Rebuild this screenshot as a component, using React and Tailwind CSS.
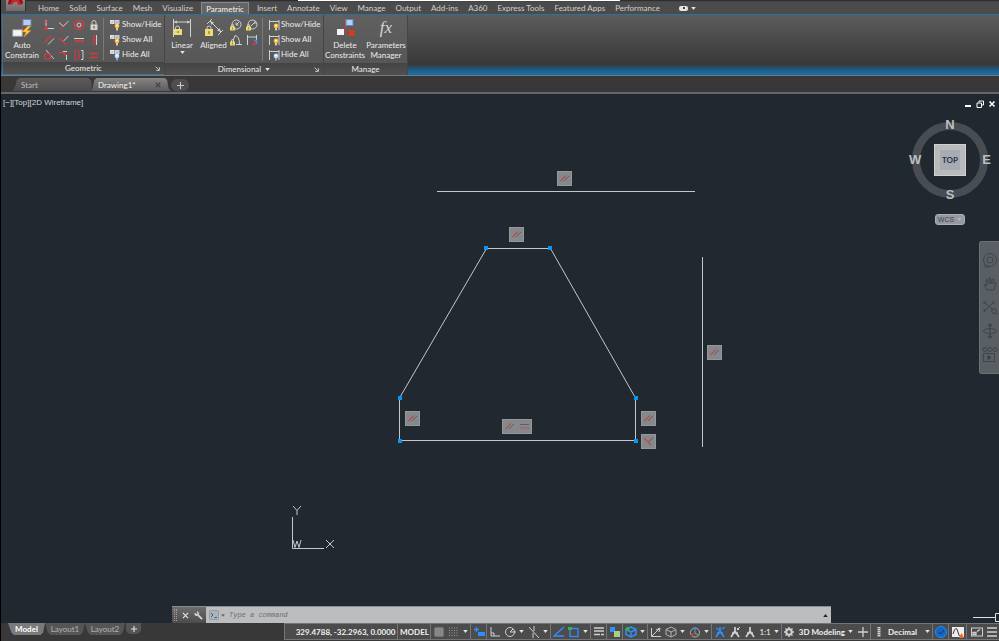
import React, { useState } from "react";

const ribbonTabs = [
  "Home", "Solid", "Surface", "Mesh", "Visualize", "Parametric", "Insert", "Annotate",
  "View", "Manage", "Output", "Add-ins", "A360", "Express Tools", "Featured Apps", "Performance",
];

const RED = "#e0363a";
const BLUE = "#2f8fff";

const Icon = ({ children, box = 12, className = "w-3 h-3" }) => (
  <svg viewBox={`0 0 ${box} ${box}`} className={`shrink-0 ${className}`} fill="none" stroke="#d0d0d0" strokeWidth="1" aria-hidden="true">
    {children}
  </svg>
);

const Caret = ({ className = "" }) => (
  <svg viewBox="0 0 6 4" className={`w-[5px] h-[3px] shrink-0 ${className}`} aria-hidden="true">
    <path d="M0 0H6L3 4Z" fill="#e4e4e4" />
  </svg>
);

const Lock = ({ x = 0, y = 0 }) => (
  <g transform={`translate(${x} ${y})`}>
    <path d="M1.5 4V2.500a1 1 0 0 1 2 0V4" stroke="#d8d8d8" />
    <rect x="0" y="3.5" width="5" height="4" fill="#efd76a" stroke="none" />
    <path d="M2.500 4.500V6.500" stroke="#9a7a20" strokeWidth=".8" />
  </g>
);

// 4 x 3 grid of the geometric constraints
const constraints = [
  { name: "Coincident", art: <><path d="M3 1V7M4.500 9.500H11" /><path d="M1 3H5M3 7V9" stroke={RED} /><rect x="1.500" y="8" width="3" height="3" fill={RED} stroke="none" /></> },
  { name: "Collinear", art: <><path d="M5.500 7L10.500 2M1 3.500L5.500 7.500" /><path d="M2 10.500L5 8" stroke={RED} strokeWidth="1.300" /></> },
  { name: "Concentric", art: <><circle cx="6" cy="6" r="4.5" stroke={RED} strokeWidth="1.400" /><circle cx="6" cy="6" r="2" /></> },
  { name: "Fix", art: <><path d="M4 6V3.5a2 2 0 0 1 4 0V6" /><rect x="2.500" y="5.5" width="7" height="5.500" fill="#d8d4c8" stroke="none" /><path d="M6 7V9.500" stroke="#444" /></> },
  { name: "Parallel", art: <><path d="M5 10.500L11 4.500" /><path d="M1.500 8.500L8 2" stroke={RED} strokeWidth="1.300" /></> },
  { name: "Perpendicular", art: <><path d="M5 7.500L10.500 2" /><path d="M1.500 4L8 10.500" stroke={RED} strokeWidth="1.300" /></> },
  { name: "Horizontal", art: <><path d="M1 4.500H11" /><path d="M1 6.500H11M2 9.500L4 7M5 9.500L7 7M8 9.500L10 7" stroke={RED} /></> },
  { name: "Vertical", art: <><path d="M8.500 1V11" /><path d="M6.500 1V11M3.500 3.500L6 2M3.500 6.500L6 5M3.500 9.500L6 8" stroke={RED} /></> },
  { name: "Tangent", art: <><path d="M3 1L11 10" /><circle cx="4.500" cy="7.500" r="3" stroke={RED} strokeWidth="1.200" /></> },
  { name: "Smooth", art: <><path d="M1 3.500H4Q8 3.500 8 7" stroke={RED} strokeWidth="1.300" /><path d="M8.500 6V11M5 2.500H9" /></> },
  { name: "Symmetric", art: <><path d="M4 1.500H2V10.500H4M6 1V11" stroke={RED} /><path d="M8 1.500H10V10.500H8" /></> },
  { name: "Equal", art: <path d="M2 4.500H10M2 8.500H10" stroke={RED} strokeWidth="1.400" /> },
];

const dimTools = [
  { name: "Radius", art: <><circle cx="6.5" cy="5.5" r="4.500" /><path d="M6 6L9 3M6 3.500V6H8.500" /><Lock x={0} y={4} /></> },
  { name: "Diameter", art: <><circle cx="6.5" cy="5.5" r="4.500" /><path d="M5 7L10 2M9 5V2.500" /><Lock x={0} y={4} /></> },
  { name: "Angular", art: <><path d="M5 1.500Q9.500 2 9.500 10.500M5 1.500L3 7M6 10.500H12" /><Lock x={0} y={4} /></> },
  { name: "Convert", art: <><path d="M1.500 1V11M10.500 1V6M2 3H10" /><path d="M8 6.500H10.500V10" stroke={BLUE} strokeWidth="1.500" /><path d="M7 10.500L10 9" stroke={RED} strokeWidth="2" /></> },
];

const Bulb = ({ lit }) => (
  <>
    <circle cx="8" cy="7" r="2.400" fill={lit ? "#ffb52e" : "#b9d6ff"} stroke="none" />
    <circle cx="8" cy="6.500" r="1" fill="#fff" stroke="none" />
    <path d="M8 9V11.500" stroke={lit ? "#f4e8c8" : "#8ab4ea"} strokeWidth="1.600" />
  </>
);

const GeoBulb = ({ lit }) => (
  <Icon>
    <rect x="1" y="1" width="4.500" height="4" fill="#e3e3e3" stroke="none" />
    <rect x="6" y="1" width="4.500" height="4" fill="#c4cfe4" stroke="none" />
    <path d="M2 4.500L4 2.500M7 4.500L9 2.500" stroke="#777" strokeWidth=".7" />
    <Bulb lit={lit} />
  </Icon>
);

const DimBulb = ({ lit }) => (
  <Icon>
    <path d="M1.500 1V11M11 1V11M1 2.500H11" />
    <Bulb lit={lit} />
  </Icon>
);

const ShowHide = ({ Glyph }) => (
  <div className="flex flex-col pt-px">
    {["Show/Hide", "Show All", "Hide All"].map((label) => (
      <button key={label} className="flex items-center gap-px h-[15px] leading-[15px] whitespace-nowrap">
        <Glyph lit={label !== "Hide All"} />
        {label}
      </button>
    ))}
  </div>
);

const BigButton = ({ lines, icon, caret, className }) => (
  <button className={`flex flex-col items-center shrink-0 leading-[10px] ${className}`}>
    <span className="h-6 flex items-center">{icon}</span>
    {lines.map((line) => (
      <span key={line} className="whitespace-nowrap">{line}</span>
    ))}
    {caret && <Caret className="mt-px" />}
  </button>
);

const Panel = ({ title, caret, launcher, className, children }) => (
  <section className={`flex flex-col shrink-0 border-r border-[#454545] bg-linear-to-b from-[#606060] to-[#545454] ${className}`}>
    <div className="flex h-12 pt-px">{children}</div>
    <div className="relative flex items-center justify-center gap-1 grow leading-3 bg-linear-to-b from-[#444444] to-[#505050]">
      {title}
      {caret && <Caret />}
      {launcher && (
        <button className="absolute right-1" aria-label={`${title} settings`}>
          <Icon box={8} className="w-[5px] h-[5px]">
            <path d="M1 1L6 6M7 2V7H2" strokeWidth="1.500" />
          </Icon>
        </button>
      )}
    </div>
  </section>
);

const Divider = () => <div className="w-px ml-[2px] my-[2px] bg-[#7a7a7a]" />;

const Ribbon = () => (
  <div className="flex h-[62px] border-t border-b border-t-[#2f6f9c] border-b-[#777777] pl-px text-[#ececec] bg-[linear-gradient(#5c5c5c,#383838_82%,#17689c_95%,#1a6ca2)]">
    <Panel title="Geometric" launcher className="w-[163px] border-l border-l-[#3a7396] border-b border-b-[#3a7396]">
      <BigButton
        className="w-[38px]"
        lines={["Auto", "Constrain"]}
        icon={
          <Icon box={20} className="w-5 h-5">
            <path d="M10.500 1V15" stroke={RED} />
            <rect x="11" y="1.500" width="8" height="6" fill="#b7cef2" stroke="#5f86c4" />
            <rect x="1" y="12" width="9" height="6" fill="#f4f4f4" stroke="#cccccc" />
            <path d="M16 8L10 14H14L12 19L19 12.500H15L19 8Z" fill="#ffc83d" stroke="#d88a10" strokeWidth=".5" />
          </Icon>
        }
      />
      <div className="grid grid-cols-4 w-[60px] h-[46px] pt-px shrink-0">
        {constraints.map((c) => (
          <button key={c.name} aria-label={c.name} className="flex items-center justify-center">
            <Icon>{c.art}</Icon>
          </button>
        ))}
      </div>
      <Divider />
      <div className="pl-[5px]">
        <ShowHide Glyph={GeoBulb} />
      </div>
    </Panel>

    <Panel title="Dimensional" caret launcher className="w-[159px]">
      <BigButton
        className="w-[34px]"
        lines={["Linear"]}
        caret
        icon={
          <Icon box={20} className="w-5 h-5">
            <path d="M1.500 1V19M18.500 1V19M2 4H18" />
            <path d="M2 4L5 2.500V5.500ZM18 4L15 2.500V5.500Z" fill="#d0d0d0" stroke="none" />
            <path d="M3.500 12V10a2 2 0 0 1 4 0V12" />
            <rect x="2" y="11" width="8" height="6" fill="#f0da72" stroke="none" />
            <path d="M6 13V15" stroke="#7a6020" />
          </Icon>
        }
      />
      <BigButton
        className="w-[29px]"
        lines={["Aligned"]}
        icon={
          <Icon box={20} className="w-5 h-5">
            <path d="M6 3L17 14M3 6L8 1M14 17L19 12" />
            <path d="M6 3L10 4.500L7.500 7ZM17 14L13 12.500L15.500 10Z" fill="#d0d0d0" stroke="none" />
            <path d="M3 12V10a2 2 0 0 1 4 0V12" />
            <rect x="1" y="11" width="8" height="7" fill="#f0da72" stroke="none" />
            <path d="M5 13V16" stroke="#7a6020" />
          </Icon>
        }
      />
      <div className="grid grid-cols-2 w-[32px] h-[31px] pt-px shrink-0">
        {dimTools.map((t) => (
          <button key={t.name} aria-label={t.name} className="flex items-center justify-center">
            <Icon>{t.art}</Icon>
          </button>
        ))}
      </div>
      <Divider />
      <div className="pl-[5px]">
        <ShowHide Glyph={DimBulb} />
      </div>
    </Panel>

    <Panel title="Manage" className="w-[84px]">
      <BigButton
        className="w-[42px]"
        lines={["Delete", "Constraints"]}
        icon={
          <Icon box={20} className="w-5 h-5">
            <path d="M10.500 1V16" stroke={RED} />
            <rect x="11" y="1.500" width="7" height="6" fill="#b7cef2" stroke="#5f86c4" />
            <rect x="2" y="11" width="7" height="6" fill="#f4f4f4" stroke="none" />
            <path d="M14 12.500L19 17.500M19 12.500L14 17.500" stroke="#ea3414" strokeWidth="2.500" />
          </Icon>
        }
      />
      <BigButton
        className="w-[40px]"
        lines={["Parameters", "Manager"]}
        icon={<span className="font-['Liberation_Serif',serif] italic text-[17px] leading-5 text-[#d6d6d6]">fx</span>}
      />
    </Panel>
  </div>
);

const RibbonTabs = ({ active, onSelect }) => (
  <nav className="flex items-stretch h-[14px] bg-[#4b4b4b] text-[#d0d0d0]">
    <button aria-label="Application menu" className="ml-[5px] mb-[3px] w-5 shrink-0 overflow-hidden bg-linear-to-b from-[#8a8a8a] to-[#6c6c6c] border-r border-[#333333]">
      <svg viewBox="0 0 20 11" className="w-5 h-[11px]" aria-hidden="true">
        <path d="M3 0H16L17 3L15 5H12L11 2H8L7 4L3 5L2 4Z" fill="#c8262c" />
        <path d="M3 0H6L4 4L2 4ZM13 0H16L17 3L15 4Z" fill="#8f1218" />
      </svg>
    </button>
    <div className="flex flex-col grow">
      <div className="h-px shrink-0 bg-[#2e2e2e]">
        <div className="h-px w-[33%] ml-[28%] bg-white" />
      </div>
      <div className="flex grow border-t border-[#444444] pl-[7px]">
        {ribbonTabs.map((tab) => (
          <button
            key={tab}
            onClick={() => onSelect(tab)}
            className={
              tab === active
                ? "mx-[3px] px-[4px] bg-[#656565] border border-b-0 border-[#8a8a8a] text-[#f4f4f4] leading-[10px] whitespace-nowrap"
                : "px-[5px] leading-3 whitespace-nowrap"
            }
          >
            {tab}
          </button>
        ))}
        <button aria-label="Ribbon display" className="flex items-center gap-[3px] ml-[14px]">
          <span className="flex items-center justify-center w-[9px] h-[5px] rounded-[2px] bg-[#e4e4e4]">
            <span className="w-[2px] h-[2px] bg-[#444444]" />
          </span>
          <Caret />
        </button>
      </div>
    </div>
  </nav>
);

const FileTabs = () => (
  <div className="flex items-end h-[18px] pl-3 pb-px bg-[#383838] border-b-2 border-[#666666] text-[#bdbdbd]">
    <button className="w-[79px] h-[13px] pl-2 text-left leading-[14px] bg-linear-to-b from-[#5c5c5c] to-[#4b4b4b] [clip-path:polygon(0_100%,3%_60%,5%_15%,8%_0,95%_0,99%_20%,100%_100%)]">
      Start
    </button>
    <div className="flex items-center w-[79px] h-[13px] pl-[6px] pr-[10px] bg-linear-to-b from-[#858585] to-[#5c5c5c] text-[#f2f2f2] [clip-path:polygon(0_100%,3%_15%,6%_0,92%_0,95%_15%,97%_80%,100%_100%)]">
      <button className="leading-[14px]">Drawing1*</button>
      <button aria-label="Close drawing" className="ml-auto">
        <Icon box={8} className="w-[6px] h-[6px]"><path d="M1 1L7 7M7 1L1 7" stroke="#444444" strokeWidth="1.500" /></Icon>
      </button>
    </div>
    <button aria-label="New drawing" className="flex items-center justify-center w-[18px] h-3 rounded-md bg-[#4e4e4e]">
      <Icon box={8} className="w-[7px] h-[7px]"><path d="M4 0V8M0 4H8" stroke="#c8c8c8" strokeWidth="1.300" /></Icon>
    </button>
  </div>
);

const Badge = ({ x, y, kind = "parallel" }) => (
  <g transform={`translate(${x} ${y})`}>
    <rect x=".5" y=".5" width={kind === "pair" ? 29 : 14} height="14" fill="#85898c" stroke="#94989b" />
    {kind === "perpendicular" ? (
      <>
        <path d="M7 8L12 4" stroke="#5a5f64" />
        <path d="M3 4L10 11" stroke="#c2484a" strokeWidth="1.200" />
      </>
    ) : (
      <>
        <path d="M7 10L12 5" stroke="#5a5f64" />
        <path d="M3.500 10L9 4.500" stroke="#c2484a" strokeWidth="1.200" />
      </>
    )}
    {kind === "pair" && (
      <>
        <path d="M18 5.500H27" stroke="#5c6165" />
        <path d="M18 8.500H27M19 10.500L21 9M22 10.500L24 9M25 10.500L27 9" stroke="#b85a5c" strokeWidth=".8" />
      </>
    )}
  </g>
);

const grips = [[485, 154], [549, 154], [399, 304], [635, 304], [399, 347], [635, 347]];

// Model space geometry, its constraint bars and the UCS icon
const Drawing = () => (
  <svg className="absolute inset-0 w-full h-full" fill="none" stroke="#c4c7ca" strokeWidth="1">
    <path d="M436 97.500H694M701.500 163V353" />
    <path d="M485.500 154.500H549.500L634.500 304V346.500H398.500V304Z" />
    {grips.map(([x, y]) => (
      <rect key={`${x}-${y}`} x={x - 2} y={y - 2} width="4" height="4" fill="#0a96f5" stroke="none" />
    ))}
    <Badge x={556} y={77} />
    <Badge x={508} y={133} />
    <Badge x={706} y={251} />
    <Badge x={404} y={317} />
    <Badge x={640} y={317} />
    <Badge x={640} y={340} kind="perpendicular" />
    <Badge x={501} y={325} kind="pair" />
    <path d="M291.500 423V454.500H323" />
    <path d="M292 412L296 416.500L300 412M296 416.500V421M325 446L333 454M333 446L325 454M292 446L294 453.500L296 447L298 453.500L300 446" />
  </svg>
);

const ViewCube = () => (
  <div className="absolute top-[23px] right-2 w-[82px] flex flex-col items-center font-['Liberation_Sans',sans-serif] font-bold">
    <div className="relative flex items-center justify-center w-[82px] h-[86px]">
      <div className="absolute w-[76px] h-[76px] rounded-full border-8 border-[#484d54]" />
      <div className="absolute inset-0 flex flex-col justify-between items-center text-[13px] leading-4 text-[#bcbfc2]">
        <span>N</span>
        <span>S</span>
      </div>
      <div className="absolute inset-0 flex justify-between items-center text-[13px] leading-4 text-[#bcbfc2]">
        <span>W</span>
        <span>E</span>
      </div>
      <button className="relative flex items-center justify-center w-8 h-8 bg-[#b9babb] border border-[#cfcfcf]">
        <span className="flex items-center justify-center w-5 h-5 bg-[#a7abb3] font-['Lato',sans-serif] text-[8px] text-[#30353c]">TOP</span>
      </button>
    </div>
    <button className="flex items-center justify-center gap-[3px] w-[30px] h-[11px] mt-[11px] rounded-[3px] bg-[#9699a3] border border-[#abaeb8] font-normal text-[7px] leading-[9px] text-[#3e434c]">
      WCS
      <svg viewBox="0 0 6 4" className="w-[5px] h-[3px]" aria-hidden="true"><path d="M0 0H6L3 4Z" fill="#b4b8c2" /></svg>
    </button>
  </div>
);

const navTools = [
  { name: "Steering wheel", art: <><circle cx="8" cy="8" r="6.500" /><circle cx="8" cy="8" r="3" /><path d="M3 12V15H8" /></> },
  { name: "Pan", art: <path d="M5 14L2 9L3 8L5 10L4 4L5 3L7 8V2L8.500 2L9 8L10.500 3L12 3.500L11 8L13 6L14 7L12 14Z" /> },
  { name: "Zoom extents", art: <><path d="M2 2L12 11M12 2L2 11M2 4V2H4M10 2H12V4M2 9V11H4" /><circle cx="12" cy="11" r="2.500" /><path d="M14 13L16 15" /></> },
  { name: "Orbit", art: <><path d="M8 1V15M6 3L8 1L10 3M6 13L8 15L10 13" strokeWidth="1.300" /><ellipse cx="8" cy="8" rx="6.500" ry="2.500" /></> },
  { name: "ShowMotion", art: <><circle cx="3" cy="2.500" r="2" /><circle cx="8" cy="2.500" r="2" /><circle cx="13" cy="2.500" r="2" /><rect x="1.500" y="6.500" width="11" height="8" /><path d="M6 8.500L9 10.500L6 12.500Z" fill="#353b42" /></> },
];

const NavBar = () => (
  <div className="absolute top-[147px] right-0 w-5 flex flex-col items-center py-[10px] h-[133px] justify-between rounded-l-[3px] bg-[#5a5f63] border border-r-0 border-[#6c7175]">
    {navTools.map((t) => (
      <button key={t.name} aria-label={t.name}>
        <Icon box={16} className="w-4 h-4"><g stroke="#3f454c">{t.art}</g></Icon>
      </button>
    ))}
  </div>
);

const WindowControls = () => (
  <div className="absolute top-[6px] right-[3px] flex gap-1">
    <button aria-label="Minimize"><Icon box={8} className="w-2 h-2"><path d="M1 6H7" stroke="#fff" strokeWidth="2" /></Icon></button>
    <button aria-label="Restore"><Icon box={8} className="w-2 h-2"><path d="M3 2.500V1H7.500V5H6M1 3H5.500V7.500H1Z" stroke="#fff" /></Icon></button>
    <button aria-label="Close"><Icon box={8} className="w-2 h-2"><path d="M1.500 1.500L6.500 6.500M6.500 1.500L1.500 6.500" stroke="#fff" strokeWidth="1.500" /></Icon></button>
  </div>
);

const CommandLine = () => (
  <div className="absolute left-[171px] right-[168px] bottom-0 flex items-stretch h-[17px] bg-[#bcbdbf] border-t border-[#8a8d90]">
    <div className="flex items-center gap-[5px] w-[34px] pl-[2px] bg-linear-to-b from-[#6c6c6c] to-[#4c4c4c]">
      <span className="w-[3px] h-3 border-x border-dotted border-[#a0a0a0]" />
      <button aria-label="Close command line"><Icon box={8} className="w-[7px] h-[7px]"><path d="M1 1L7 7M7 1L1 7" stroke="#e4e4e4" strokeWidth="1.300" /></Icon></button>
      <button aria-label="Customize">
        <Icon box={10} className="w-[9px] h-[9px]">
          <path d="M4 4L9 9" stroke="#d6d6d6" strokeWidth="2" />
          <path d="M1 2.500L3 4.500L5 2.500L3.500 .8M1 2.500Q1 5 3.500 5" stroke="#d6d6d6" strokeWidth="1.300" />
        </Icon>
      </button>
    </div>
    <button aria-label="Recent commands" className="flex items-center gap-[2px] pl-[3px]">
      <Icon box={10} className="w-[10px] h-[10px]">
        <rect x=".5" y=".5" width="9" height="9" rx="1" fill="#aab4bd" stroke="#8f9ba5" />
        <path d="M2 3L4 5L2 7M5.500 7.500H8" stroke="#4a5965" />
      </Icon>
      <svg viewBox="0 0 6 4" className="w-[4px] h-[3px]" aria-hidden="true"><path d="M0 0H6L3 4Z" fill="#666666" /></svg>
    </button>
    <input
      aria-label="Command"
      placeholder="Type a command"
      className="grow min-w-0 pl-[4px] bg-transparent outline-none italic font-['Liberation_Mono',monospace] text-[7px] text-[#333333] placeholder:text-[#6e7072]"
    />
    <button aria-label="Command history" className="pr-[3px]">
      <svg viewBox="0 0 6 4" className="w-[5px] h-[3px]" aria-hidden="true"><path d="M0 4H6L3 0Z" fill="#222222" /></svg>
    </button>
  </div>
);

// status bar toggles, grouped as they are separated on screen
const statusGroups = [
  [
    { name: "Grid", art: <path d="M2 2H10V10H2ZM4 2V10M6 2V10M8 2V10M2 4H10M2 6H10M2 8H10" stroke="#a2a2a2" strokeWidth=".9" /> },
    { name: "Snap", art: <path d="M1 2H11M1 4.500H11M1 7H11M1 9.500H11" stroke="#9a9a9a" strokeDasharray="1 1.500" /> },
    { name: "Snap options", caret: true },
  ],
  [{ name: "Infer constraints", art: <><path d="M1 3.500H6M3.500 1V6" stroke={BLUE} strokeWidth="1.300" /><rect x="5" y="6" width="7" height="4" fill={BLUE} stroke="none" /></> }],
  [
    { name: "Ortho", art: <path d="M2 1V10H11M2 7H5V10" /> },
    { name: "Polar", art: <><circle cx="6" cy="6" r="4.500" /><path d="M6 6H12M6 6L9 3" /></> },
    { name: "Polar options", caret: true },
    { name: "Isoplane", art: <path d="M1 1L11 12M6 0V5M5 7V12" /> },
    { name: "Isoplane options", caret: true },
  ],
  [
    { name: "Object snap tracking", art: <path d="M11 1L1 10H11" stroke={BLUE} strokeWidth="1.300" /> },
    { name: "Object snap", art: <><rect x="2" y="2.500" width="8" height="8" stroke={BLUE} strokeWidth="1.300" /><rect x="0" y="1" width="4" height="3" fill="#2fb54a" stroke="none" /></> },
    { name: "Object snap options", caret: true },
  ],
  [{ name: "Lineweight", art: <path d="M1 2H11M1 5H11M1 8.500H7M8 8.500H11" strokeWidth="1.600" /> }],
  [{ name: "Selection cycling", art: <><path d="M1 1H6V6H1Z" fill={BLUE} stroke="none" /><rect x="5" y="5" width="6" height="6" fill="#a9cf8a" stroke="none" /></> }],
  [
    { name: "3D object snap", art: <><path d="M6 1L11 3.500V8.500L6 11L1 8.500V3.500ZM1 3.500L6 6L11 3.500M6 6V11" stroke={BLUE} strokeWidth="1.400" /><circle cx="2.500" cy="3" r="2" fill="#2fb54a" stroke="none" /></> },
    { name: "3D object snap options", caret: true },
  ],
  [
    { name: "Dynamic UCS", art: <path d="M1.500 2V10.500H11M2 10L9 3M6 4L10 2L9 6" /> },
    { name: "Filter", art: <path d="M6 1L11 3.500V8.500L6 11L1 8.500V3.500ZM1 3.500L6 6L11 3.500M6 6V11" stroke="#b4b4b4" /> },
    { name: "Filter options", caret: true },
    { name: "Gizmo", art: <><circle cx="6" cy="6.500" r="4.500" stroke="#b0b0b0" /><path d="M6 7V1" stroke={BLUE} strokeWidth="1.300" /><path d="M6 7L2 10" stroke={RED} strokeWidth="1.300" /><path d="M6 7L10 10" stroke="#5aa84e" strokeWidth="1.300" /></> },
    { name: "Gizmo options", caret: true },
  ],
];

const person = <path d="M6 1V5L2 11M6 5L10 11M3 7H9" strokeWidth="1.700" />;

const StatusItem = ({ name, art, caret }) => (
  <button aria-label={name} className={caret ? "flex items-center justify-center w-[9px]" : "flex items-center justify-center w-[15px]"}>
    {caret ? <Caret /> : <Icon>{art}</Icon>}
  </button>
);

const StatusGroup = ({ children }) => (
  <div className="flex items-stretch shrink-0 border-r border-[#757575]">{children}</div>
);

const StatusBar = () => (
  <div className="flex items-stretch h-[17px] ml-auto bg-[#4c4c4c] border border-r-0 border-[#757575] text-[#f0f0f0]">
    <StatusGroup>
      <button className="w-28 pr-[2px] text-right whitespace-nowrap font-bold">329.4788, -32.2963, 0.0000</button>
    </StatusGroup>
    <StatusGroup>
      <button className="w-8 font-bold">MODEL</button>
    </StatusGroup>
    {statusGroups.map((group) => (
      <StatusGroup key={group[0].name}>
        {group.map((item) => <StatusItem key={item.name} {...item} />)}
      </StatusGroup>
    ))}
    <StatusGroup>
      <StatusItem name="Annotation visibility" art={<g stroke={BLUE}>{person}<path d="M8 3L11 1M2 2L5 4" strokeWidth="1.300" /></g>} />
      <StatusItem name="Auto scale" art={<>{person}<path d="M8 4L11 1M8 2L10 4" /></>} />
      <StatusItem name="Annotation scale" art={person} />
      <button className="flex items-center gap-[3px] px-[2px]">1:1 <Caret /></button>
    </StatusGroup>
    <StatusGroup>
      <StatusItem name="Workspace" art={<><circle cx="6" cy="6" r="2.700" strokeWidth="2" /><path d="M6 1V3M6 9V11M1 6H3M9 6H11M2.500 2.500L4 4M8 8L9.500 9.500M9.500 2.500L8 4M4 8L2.500 9.500" strokeWidth="1.500" /></>} />
      <button className="flex items-center gap-[3px] px-[2px] whitespace-nowrap font-bold">3D Modeling <Caret /></button>
      <StatusItem name="Annotation monitor" art={<path d="M6 1V11M1 6H11" strokeWidth="1.300" />} />
    </StatusGroup>
    <StatusGroup>
      <StatusItem name="Units" art={<path d="M6 1V11" strokeWidth="3" strokeDasharray="1.500 .5" />} />
      <button className="flex items-center gap-2 px-[2px] font-bold">Decimal <Caret /></button>
    </StatusGroup>
    <StatusGroup>
      <StatusItem name="Hardware acceleration" art={<><circle cx="6" cy="6" r="5.500" fill="#1566c0" stroke="#1f8cff" /><path d="M3.500 6L5.500 8L9 4" stroke="#0a3b78" /></>} />
    </StatusGroup>
    <StatusGroup>
      <span className="flex px-px">
        <StatusItem name="Graphics performance" art={<><rect x="0" y="1" width="12" height="10" fill="#eeeeee" stroke="none" /><path d="M1 8Q4 -2 6 6T10 8" stroke="#333333" /><path d="M7 12L9.500 7L12 12Z" fill="#f06a1c" stroke="none" /></>} />
      </span>
    </StatusGroup>
    <div className="flex pl-[2px]">
      <StatusItem name="Clean screen" art={<><rect x=".5" y="2" width="11" height="8" /><path d="M6 5.500L9 3.500M2 8.500H5V6.500H2Z" strokeWidth="1.300" /></>} />
      <StatusItem name="Customization" art={<path d="M1 2H11M1 6H11M1 10H11" strokeWidth="1.500" />} />
    </div>
  </div>
);

const layouts = ["Model", "Layout1", "Layout2"];

const LayoutTabs = () => (
  <div className="flex items-start pl-[7px] text-[#b4b4b4]">
    {layouts.map((name) => (
      <button
        key={name}
        className={
          name === "Model"
            ? "w-[37px] h-3 leading-3 font-bold text-white bg-[#7a7a7a] [clip-path:polygon(0_0,100%_0,95%_80%,88%_100%,16%_100%,9%_80%)]"
            : "w-10 h-3 leading-3 bg-[#555555] [clip-path:polygon(0_0,100%_0,94%_80%,88%_100%,14%_100%,7%_80%)]"
        }
      >
        {name}
      </button>
    ))}
    <button aria-label="New layout" className="flex items-center justify-center w-[15px] h-[11px] ml-px rounded-b-[5px] bg-[#555555]">
      <Icon box={8} className="w-[6px] h-[6px]"><path d="M4 0V8M0 4H8" stroke="#e0e0e0" strokeWidth="1.500" /></Icon>
    </button>
  </div>
);

const App = () => {
  const [activeTab, setActiveTab] = useState("Parametric");

  return (
    <div className="flex flex-col h-screen overflow-hidden border-l border-black bg-[#383838] font-['Lato',sans-serif] text-[8px]">
      <RibbonTabs active={activeTab} onSelect={setActiveTab} />
      <Ribbon />
      <FileTabs />
      <main className="relative grow min-h-0 overflow-hidden bg-[#212830]">
        <Drawing />
        <p className="absolute top-[3px] left-[2px] leading-3 font-['Liberation_Sans',sans-serif] text-[#d4d6d8]">[−][Top][2D Wireframe]</p>
        <WindowControls />
        <ViewCube />
        <NavBar />
        <CommandLine />
        <svg viewBox="0 0 26 10" className="absolute right-0 bottom-0 w-[26px] h-[10px]" fill="none" stroke="#e0e0e0" aria-hidden="true">
          <path d="M0 4.500H22M26 .5H22.500V8.500H26" />
        </svg>
      </main>
      <footer className="flex h-[18px]">
        <LayoutTabs />
        <StatusBar />
      </footer>
    </div>
  );
};

export default App;
